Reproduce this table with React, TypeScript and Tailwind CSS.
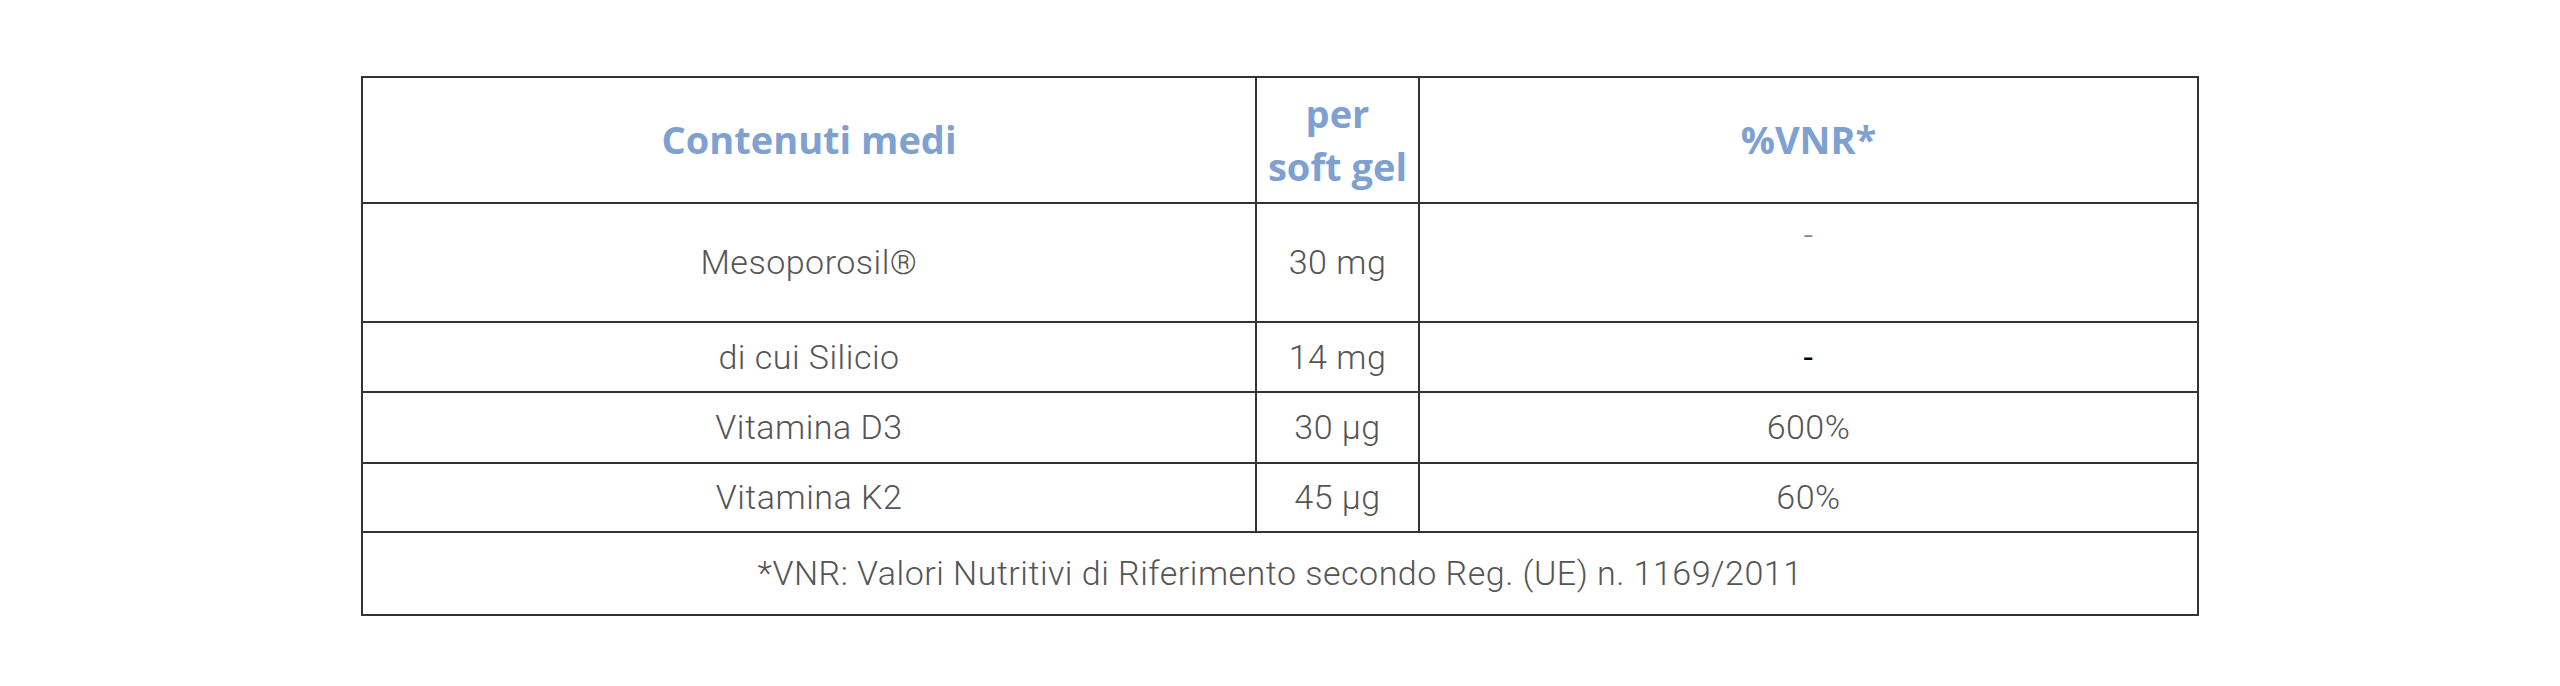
const ROWS = [
  { name: "di cui Silicio", amount: "14 mg", vnr: "-", h: "h-[70px]", dark: true },
  { name: "Vitamina D3", amount: "30 μg", vnr: "600%", h: "h-[71px]" },
  { name: "Vitamina K2", amount: "45 μg", vnr: "60%", h: "h-[69px]" },
] as const;

const head = "font-['Open_Sans',sans-serif] text-[38px] font-bold leading-[1.4] text-[#7ea1d0]";
const body = "font-['Roboto',sans-serif] text-[34px] font-light tracking-[0.5px] text-[#555]";

export default function App() {
  return (
    <div className="min-h-[686px] bg-white pt-[76px]">
      <div className="mx-auto w-[1838px] border-2 border-[#333]">
        {/* Header */}
        <div className="flex h-[126px] border-b-2 border-[#333]">
          <div className={`flex w-[894px] items-center justify-center border-r-2 border-[#333] ${head}`}>
            Contenuti medi
          </div>
          <div className={`flex w-[163px] items-center justify-center border-r-2 border-[#333] text-center ${head}`}>
            per
            <br />
            soft gel
          </div>
          <div className={`flex flex-1 items-center justify-center ${head}`}>%VNR*</div>
        </div>

        {/* Mesoporosil row, dash sits near the top */}
        <div className={`flex h-[119px] border-b-2 border-[#333] ${body}`}>
          <div className="flex w-[894px] items-center justify-center border-r-2 border-[#333]">
            Mesoporosil®
          </div>
          <div className="flex w-[163px] items-center justify-center border-r-2 border-[#333]">
            30 mg
          </div>
          <div className="flex flex-1 justify-center pt-[6px] text-[#888]">-</div>
        </div>

        {ROWS.map((r) => (
          <div key={r.name} className={`flex border-b-2 border-[#333] ${r.h} ${body}`}>
            <div className="flex w-[894px] items-center justify-center border-r-2 border-[#333]">
              {r.name}
            </div>
            <div className="flex w-[163px] items-center justify-center border-r-2 border-[#333]">
              {r.amount}
            </div>
            <div
              className={`flex flex-1 items-center justify-center ${"dark" in r ? "font-normal text-black" : ""}`}
            >
              {r.vnr}
            </div>
          </div>
        ))}

        {/* Footnote */}
        <div className={`flex h-[81px] items-center justify-center ${body}`}>
          *VNR: Valori Nutritivi di Riferimento secondo Reg. (UE) n. 1169/2011
        </div>
      </div>
    </div>
  );
}
